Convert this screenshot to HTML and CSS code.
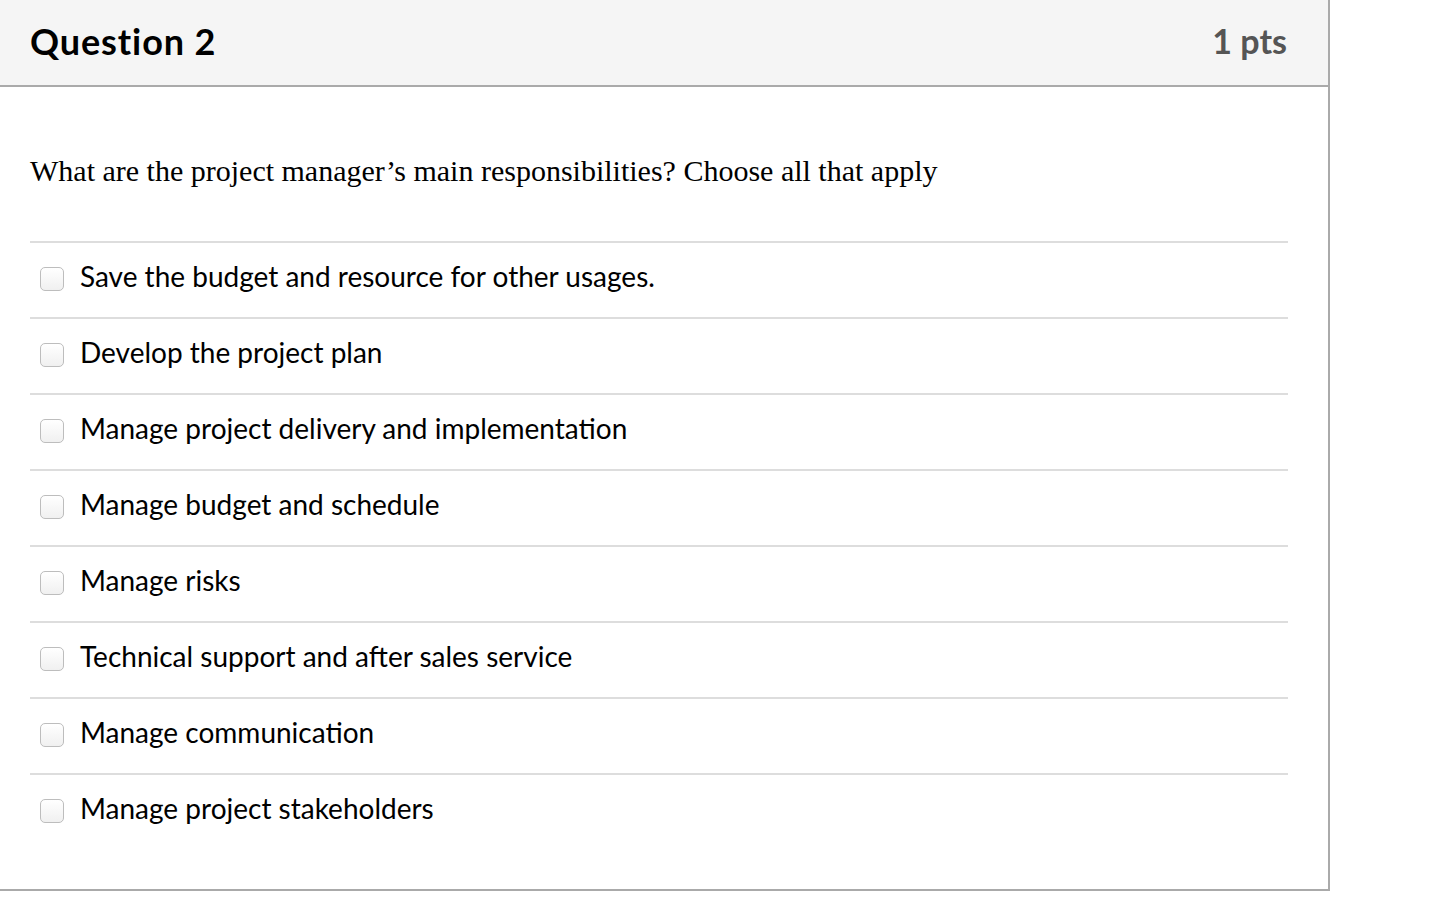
FILE: index.html
```html
<!DOCTYPE html>
<html lang="en">
<head>
  <meta charset="UTF-8" />
  <title>Question 2</title>
  <link rel="stylesheet" href="styles.css">
</head>
<body>

  <div class="question">
    <div class="header">
      <h2 class="title">Question 2</h2>
      <span class="points">1 pts</span>
    </div>
    <div class="content">
      <p class="text">What are the project manager’s main responsibilities? Choose all that apply</p>
      <div class="answers">
        <label class="answer"><input type="checkbox"><span>Save the budget and resource for other usages.</span></label>
        <label class="answer"><input type="checkbox"><span>Develop the project plan</span></label>
        <label class="answer"><input type="checkbox"><span>Manage project delivery and implementation</span></label>
        <label class="answer"><input type="checkbox"><span>Manage budget and schedule</span></label>
        <label class="answer"><input type="checkbox"><span>Manage risks</span></label>
        <label class="answer"><input type="checkbox"><span>Technical support and after sales service</span></label>
        <label class="answer"><input type="checkbox"><span>Manage communication</span></label>
        <label class="answer"><input type="checkbox"><span>Manage project stakeholders</span></label>
      </div>
    </div>
  </div>

</body>
</html>
```

FILE: styles.css
```css
* {
  box-sizing: border-box;
}

body {
  margin: 0;
  background: #fff;
  color: #000;
  font-family: Lato, 'Liberation Sans', sans-serif;
}

.question {
  width: 1330px;
  border-right: 2px solid #aaa;
  border-bottom: 2px solid #aaa;
}

.header {
  display: flex;
  justify-content: space-between;
  align-items: center;
  height: 87px;
  padding: 0 41px 4px 30px;
  background: #f5f5f5;
  border-bottom: 2px solid #aaa;
}

.title {
  margin: 0;
  font-size: 36px;
  font-weight: bold;
  letter-spacing: 0.9px;
}

.points {
  font-size: 34px;
  font-weight: bold;
  color: #555;
}

.content {
  padding: 0 40px 40px 30px;
}

.text {
  margin: 0;
  padding: 66px 0 52px;
  font-family: 'Liberation Serif', 'Times New Roman', serif;
  font-size: 30px;
  line-height: 36px;
}

.answer {
  display: flex;
  align-items: center;
  gap: 16px;
  height: 76px;
  padding: 0 10px 8px;
  border-top: 2px solid #ddd;
  font-size: 28px;
}

.answer input {
  appearance: none;
  margin: 6px 0 0;
  width: 24px;
  height: 24px;
  border: 1px solid #bdbdbd;
  border-radius: 5px;
  background: linear-gradient(#fff, #f0f0f0);
}
```
